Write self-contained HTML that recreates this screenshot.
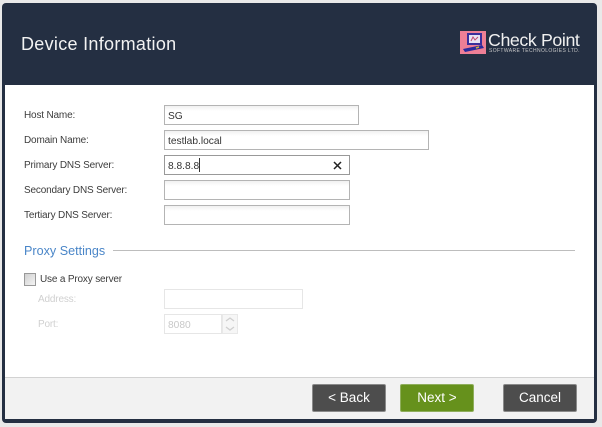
<!DOCTYPE html>
<html>
<head>
<meta charset="utf-8">
<style>
html,body{margin:0;padding:0;width:602px;height:427px;overflow:hidden;background:#e9e9e9;font-family:"Liberation Sans",sans-serif;}
.abs{position:absolute;}
.win{left:2px;top:3px;width:595px;height:420px;background:#242f42;border-radius:4px;}
.panel{left:5px;top:85px;width:589px;height:334px;background:#fff;}
.foot{left:5px;top:377px;width:589px;height:42px;background:#f2f2f2;border-top:1px solid #d2d2d2;box-sizing:border-box;}
.lbl{font-size:10px;letter-spacing:-.17px;color:#3c3c3c;line-height:14px;white-space:nowrap;}
.inp{box-sizing:border-box;height:20px;border:1px solid #b4b4b4;background:linear-gradient(#f1f1f1,#fff 5px);font-size:10.2px;color:#333;line-height:21px;padding-left:3px;white-space:nowrap;overflow:hidden;}
.dis{border-color:#e6e6e6;background:#fff;color:#c8c8c8;}
.btn{box-sizing:border-box;width:74px;height:28px;top:384px;border-radius:2px;border:1px solid #8a8a8a;background:#4d4d4d;color:#fff;font-size:13.5px;line-height:25px;text-align:center;}
</style>
</head>
<body>
<div class="abs win"></div>
<div class="abs panel"></div>
<div class="abs foot"></div>

<div class="abs" style="left:21px;top:33px;font-size:18px;line-height:22px;color:#f2f2f2;letter-spacing:.3px;white-space:nowrap;">Device Information</div>

<svg class="abs" style="left:460px;top:31px;" width="26" height="23" viewBox="0 0 26 23">
<rect width="26" height="23" fill="#ee7f96"/>
<path d="M8 3H21V13H8Z" fill="#e8e4f4" stroke="#3a2f9c" stroke-width="2"/>
<path d="M11 10L13 6L15 9L18 6" fill="none" stroke="#c04a70" stroke-width="1"/>
<path d="M3 18L22 14L24 17L5 21Z" fill="#2a2a9c"/>
<path d="M16 17L19 16" stroke="#c9b040" stroke-width="1.5"/>
</svg>
<div class="abs" style="left:488px;top:30px;font-size:17.8px;line-height:20px;color:#f0f0f0;letter-spacing:-.4px;white-space:nowrap;">Check Point</div>
<div class="abs" style="left:489px;top:48px;font-size:5px;line-height:6px;color:#c8c8c8;letter-spacing:.38px;white-space:nowrap;">SOFTWARE TECHNOLOGIES LTD.</div>

<div class="abs lbl" style="left:24px;top:109px;">Host Name:</div>
<div class="abs lbl" style="left:24px;top:134px;">Domain Name:</div>
<div class="abs lbl" style="left:24px;top:159px;">Primary DNS Server:</div>
<div class="abs lbl" style="left:24px;top:184px;">Secondary DNS Server:</div>
<div class="abs lbl" style="left:24px;top:209px;">Tertiary DNS Server:</div>

<div class="abs inp" style="left:164px;top:105px;width:195px;">SG</div>
<div class="abs inp" style="left:164px;top:130px;width:265px;">testlab.local</div>
<div class="abs inp" style="left:164px;top:155px;width:186px;background:#fff;border-color:#999;">8.8.8.8<span style="display:inline-block;width:1px;height:14px;background:#333;vertical-align:-3px;"></span></div>
<svg class="abs" style="left:333px;top:161px;" width="9" height="9" viewBox="0 0 9 9"><path d="M1 1L8 8M8 1L1 8" stroke="#222" stroke-width="1.5"/></svg>
<div class="abs inp" style="left:164px;top:180px;width:186px;"></div>
<div class="abs inp" style="left:164px;top:205px;width:186px;"></div>

<div class="abs" style="left:24px;top:244px;font-size:12.6px;line-height:15px;color:#4a86c8;white-space:nowrap;">Proxy Settings</div>
<div class="abs" style="left:113px;top:250px;width:462px;height:1px;background:#bdbdbd;"></div>

<div class="abs" style="box-sizing:border-box;left:24px;top:273px;width:12px;height:13px;border:1px solid #999;background:linear-gradient(135deg,#d0d0d0,#f4f4f4);"></div>
<div class="abs lbl" style="left:40px;top:273px;">Use a Proxy server</div>

<div class="abs lbl" style="left:38px;top:293px;color:#d0d0d0;">Address:</div>
<div class="abs lbl" style="left:38px;top:318px;color:#d0d0d0;">Port:</div>
<div class="abs inp dis" style="left:164px;top:289px;width:139px;"></div>
<div class="abs inp dis" style="left:164px;top:314px;width:58px;">8080</div>
<div class="abs" style="box-sizing:border-box;left:222px;top:314px;width:16px;height:20px;border:1px solid #e8e8e8;background:#f6f6f6;"></div>
<svg class="abs" style="left:222px;top:314px;" width="16" height="20" viewBox="0 0 16 20"><path d="M4 7L8 4L12 7M4 13L8 16L12 13" fill="none" stroke="#cfcfcf" stroke-width="1.3"/></svg>

<div class="abs btn" style="left:312px;">&lt; Back</div>
<div class="abs btn" style="left:400px;background:#66911c;border-color:#8fae5c;">Next &gt;</div>
<div class="abs btn" style="left:503px;">Cancel</div>
</body>
</html>
